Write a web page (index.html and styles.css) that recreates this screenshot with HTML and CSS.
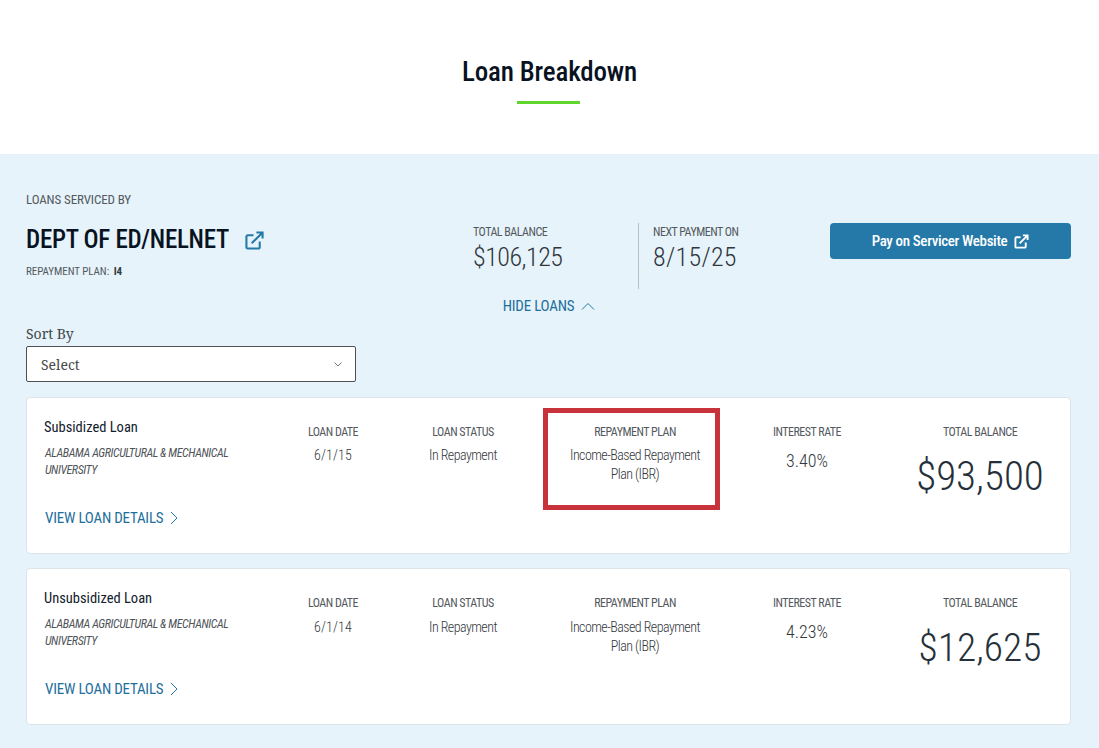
FILE: index.html
```html
<!DOCTYPE html>
<html lang="en">
<head>
<meta charset="utf-8">
<title>Loan Breakdown</title>
<link rel="stylesheet" href="styles.css">
</head>
<body>
<header class="page-head">
  <h1 class="page-title">Loan Breakdown</h1>
  <div class="title-rule"></div>
</header>
<main class="panel">
  <section class="summary">
    <div class="servicer">
      <div class="eyebrow">LOANS SERVICED BY</div>
      <h2 class="servicer-name">DEPT OF ED/NELNET
        <svg class="ext-icon" viewBox="0 0 20 20" fill="none" stroke="#2479a8" stroke-width="2.200"><path d="M15.500 11v6a1.500 1.500 0 0 1-1.500 1.500H3A1.500 1.500 0 0 1 1.500 17V6A1.500 1.500 0 0 1 3 4.500h6"/><path d="M7 13L18.500 1.500M12 1.500h6.500V8"/></svg>
      </h2>
      <div class="plan-code"><span>REPAYMENT PLAN:</span> <b>I4</b></div>
    </div>
    <div class="stat stat-balance">
      <div class="stat-label">TOTAL BALANCE</div>
      <div class="stat-value">$106,125</div>
    </div>
    <div class="stat stat-next">
      <div class="stat-label">NEXT PAYMENT ON</div>
      <div class="stat-value">8/15/25</div>
    </div>
    <a class="pay-btn">Pay on Servicer Website
      <svg class="pay-icon" viewBox="0 0 16 16" fill="none" stroke="#fff" stroke-width="2"><path d="M12.500 9v4.500a1 1 0 0 1-1 1h-9a1 1 0 0 1-1-1v-9a1 1 0 0 1 1-1H7"/><path d="M6 10L14.500 1.500M9.500 1.500h5v5"/></svg>
    </a>
  </section>
  <div class="hide-row">
    <a class="link">HIDE LOANS
      <svg class="chev-up" viewBox="0 0 14 8" fill="none" stroke="#2479a8" stroke-width="1"><path d="M1 7.500L7 1.500l6 6"/></svg>
    </a>
  </div>
  <div class="sort">
    <label class="sort-label">Sort By</label>
    <div class="select">Select
      <svg class="chev-down" viewBox="0 0 8 5" fill="none" stroke="#777" stroke-width="1"><path d="M.5 .5L4 4l3.500-3.500"/></svg>
    </div>
  </div>

  <article class="card">
    <div class="col-main">
      <h3 class="loan-name">Subsidized Loan</h3>
      <p class="school">ALABAMA AGRICULTURAL &amp; MECHANICAL UNIVERSITY</p>
      <a class="link details">VIEW LOAN DETAILS
        <svg class="chev-right" viewBox="0 0 8 14" fill="none" stroke="#2479a8" stroke-width="1"><path d="M1 1l6 6-6 6"/></svg>
      </a>
    </div>
    <div class="col"><div class="col-label">LOAN DATE</div><div class="col-val date">6/1/15</div></div>
    <div class="col"><div class="col-label">LOAN STATUS</div><div class="col-val">In Repayment</div></div>
    <div class="col col-plan highlight"><div class="col-label">REPAYMENT PLAN</div><div class="col-val plan-val">Income-Based Repayment Plan (IBR)</div></div>
    <div class="col"><div class="col-label">INTEREST RATE</div><div class="col-val rate">3.40%</div></div>
    <div class="col col-total"><div class="col-label">TOTAL BALANCE</div><div class="amount">$93,500</div></div>
  </article>

  <article class="card">
    <div class="col-main">
      <h3 class="loan-name">Unsubsidized Loan</h3>
      <p class="school">ALABAMA AGRICULTURAL &amp; MECHANICAL UNIVERSITY</p>
      <a class="link details">VIEW LOAN DETAILS
        <svg class="chev-right" viewBox="0 0 8 14" fill="none" stroke="#2479a8" stroke-width="1"><path d="M1 1l6 6-6 6"/></svg>
      </a>
    </div>
    <div class="col"><div class="col-label">LOAN DATE</div><div class="col-val date">6/1/14</div></div>
    <div class="col"><div class="col-label">LOAN STATUS</div><div class="col-val">In Repayment</div></div>
    <div class="col col-plan"><div class="col-label">REPAYMENT PLAN</div><div class="col-val plan-val">Income-Based Repayment Plan (IBR)</div></div>
    <div class="col"><div class="col-label">INTEREST RATE</div><div class="col-val rate">4.23%</div></div>
    <div class="col col-total"><div class="col-label">TOTAL BALANCE</div><div class="amount amount-2">$12,625</div></div>
  </article>
</main>
</body>
</html>
```
FILE: styles.css
```css
*, *::after { box-sizing: border-box; }
html, body { margin: 0; height: 748px; overflow: hidden; }
body {
  background: #fff;
  color: #4a4f54;
  font-family: "Roboto Condensed", "Roboto", sans-serif;
}
h1, h2, h3, p { margin: 0; font-weight: normal; }

.page-head {
  height: 154px;
  padding-top: 55px;
  display: flex;
  flex-direction: column;
  align-items: center;
}
.page-title { font-size: 27px; line-height: 34px; font-weight: 500; letter-spacing: -.15px; color: #08131f; }
.title-rule { width: 63px; height: 3px; margin-top: 12px; margin-right: 2px; background: #5fd62b; }

.panel { height: 594px; background: #e6f3fa; padding: 38px 28px 0 26px; }

.summary { display: flex; height: 97px; }
.servicer { width: 447px; }
.eyebrow { font-size: 13px; line-height: 15px; letter-spacing: -.12px; color: #54595e; }
.servicer-name {
  margin-top: 18px;
  font-size: 25px;
  line-height: 30px;
  font-weight: 500;
  letter-spacing: -.3px;
  color: #08131f;
  display: flex;
  align-items: center;
}
.ext-icon { width: 19px; height: 19px; margin-left: 16px; }
.plan-code { margin-top: 10px; font-size: 11px; line-height: 14px; letter-spacing: -.05px; color: #54595e; }
.plan-code b { color: #333a40; margin-left: 2px; }

.stat { margin-top: 31px; height: 66px; }
.stat-balance { width: 166px; border-right: 1px solid #b4c0c6; }
.stat-next { width: 191px; padding-left: 14px; }
.stat-label { margin-top: 1px; font-size: 12px; line-height: 16px; letter-spacing: -.5px; color: #54595e; }
.stat-value { margin-top: 2px; font-size: 26px; line-height: 30px; font-weight: 300; color: #30363c; }
.stat-balance .stat-value { letter-spacing: -.5px; }
.stat-next .stat-value { letter-spacing: .3px; }

.pay-btn {
  width: 241px;
  height: 36px;
  margin-top: 31px;
  background: #2479a8;
  border-radius: 4px;
  color: #fff;
  font-size: 15px;
  font-weight: 500;
  letter-spacing: -.35px;
  display: flex;
  align-items: center;
  justify-content: center;
}
.pay-icon { width: 15px; height: 15px; margin-left: 7px; }

.hide-row { margin-top: 8px; height: 18px; display: flex; justify-content: center; padding-left: 1px; }
.link {
  color: #1f6f9d;
  font-size: 15px;
  line-height: 18px;
  letter-spacing: -.22px;
  display: inline-flex;
  align-items: center;
}
.chev-up { width: 14px; height: 8px; margin-left: 7px; }

.sort { margin-top: 10px; }
.sort-label {
  display: block;
  font-family: "Noto Serif", serif;
  font-size: 14px;
  line-height: 18px;
  color: #41464b;
}
.select {
  margin-top: 3px;
  width: 330px;
  height: 36px;
  background: #fff;
  border: 1px solid #4f4f4f;
  border-radius: 2px;
  padding-left: 14px;
  font-family: "Noto Serif", serif;
  font-size: 14px;
  color: #4a4a4a;
  display: flex;
  align-items: center;
  justify-content: space-between;
}
.chev-down { width: 8px; height: 5px; margin-right: 13px; }

.card {
  display: grid;
  grid-template-columns: 241px 130px 130px 214px 130px 1fr;
  height: 157px;
  margin-top: 14px;
  background: #fff;
  border: 1px solid #dde4e8;
  border-radius: 4px;
}
.sort + .card { margin-top: 15px; }
.col-main { padding: 21px 0 0 17px; display: flex; flex-direction: column; align-items: flex-start; }
.loan-name { font-size: 14.500px; line-height: 18px; color: #12202c; }
.school {
  margin-top: 8px;
  margin-left: 1px;
  width: 200px;
  font-size: 12px;
  line-height: 17px;
  font-style: italic;
  letter-spacing: -.42px;
  color: #4f5459;
}
.details { margin-top: 30px; margin-left: 1px; }
.chev-right { width: 8px; height: 14px; margin-left: 7px; }

.col { padding-top: 27px; text-align: center; position: relative; }
.col-label { font-size: 12px; line-height: 14px; letter-spacing: -.5px; color: #54595e; }
.col-val { margin-top: 7px; font-size: 14px; line-height: 18px; font-weight: 300; letter-spacing: -.55px; color: #33383d; }
.col-val.date { letter-spacing: .1px; }
.card + .card .col-val { margin-top: 8px; }
.plan-val { width: 135px; margin-left: auto; margin-right: auto; line-height: 19px; }
.rate, .card + .card .rate { margin-top: 11px; font-size: 18px; line-height: 22px; letter-spacing: 0; }
.col-total { padding-left: 18px; }
.amount { margin-top: 14px; font-size: 41px; line-height: 46px; font-weight: 300; color: #25303a; }
.amount-2 { margin-top: 15px; font-size: 39.500px; }

.highlight::after {
  content: "";
  position: absolute;
  left: 15px;
  top: 10px;
  width: 177px;
  height: 102px;
  border: 5px solid #c8323a;
}
```
